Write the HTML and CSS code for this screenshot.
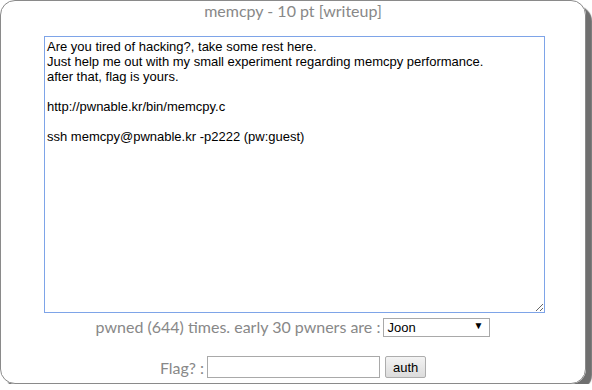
FILE: index.html
```html
<!DOCTYPE html>
<html lang="en">
<head>
    <meta charset="UTF-8">
    <title>memcpy</title>
    <link rel="stylesheet" href="styles.css">
</head>
<body>
    <div class="box">
        <div class="title">memcpy - 10 pt [writeup]</div>

        <!-- challenge description -->
        <textarea class="desc">Are you tired of hacking?, take some rest here.
Just help me out with my small experiment regarding memcpy performance.
after that, flag is yours.

http://pwnable.kr/bin/memcpy.c

ssh memcpy@pwnable.kr -p2222 (pw:guest)</textarea>

        <div class="row pwners">
            <span>pwned (644) times. early 30 pwners are :</span>
            <div class="select-wrap">
                <select class="pwner-list">
                    <option>Joon</option>
                </select>
            </div>
        </div>

        <div class="row auth">
            <span>Flag? :</span>
            <input type="text" class="flag">
            <button class="auth-btn">auth</button>
        </div>
    </div>
</body>
</html>
```

FILE: styles.css
```css
/* general */
body {
    margin: 0;
    background: #fff;
    overflow: hidden;
    font-family: 'Lato', sans-serif;
}

/* white card */
.box {
    width: 586px;
    height: 384px;
    box-sizing: border-box;
    border: 1px solid #8a8a8a;
    border-radius: 15px;
    box-shadow: 6px 6px 1px #6f6f6f;
    text-align: center;
}

.title {
    font-size: 16px;
    line-height: 20px;
    color: #888;
}

.desc {
    display: block;
    width: 501px;
    height: 277px;
    box-sizing: border-box;
    margin: 15px 0 0 43px;
    padding: 2px 2px;
    border: 1px solid #7ea4e8;
    outline: none;
    font-family: 'Liberation Sans', Arial, sans-serif;
    font-size: 13px;
    line-height: 15px;
    color: #000;
    resize: both;
}

.row {
    display: flex;
    justify-content: center;
    align-items: center;
    gap: 3px;
    font-size: 16px;
    color: #888;
}

.pwners {
    margin-top: 4px;
    height: 19px;
}

.select-wrap {
    position: relative;
}

.select-wrap::after {
    content: "\25BC";
    position: absolute;
    right: 7px;
    top: 3px;
    font-size: 10px;
    color: #000;
    pointer-events: none;
}

.pwner-list {
    appearance: none;
    width: 107px;
    height: 19px;
    box-sizing: border-box;
    margin: 0;
    padding: 0 3px;
    border: 1px solid #a9a9a9;
    border-radius: 0;
    background: #fff;
    font-family: 'Liberation Sans', Arial, sans-serif;
    font-size: 13px;
    color: #000;
}

.auth {
    margin-top: 20px;
}

.flag {
    width: 173px;
    height: 22px;
    box-sizing: border-box;
    margin: 0;
    border: 1px solid #a9a9a9;
    padding: 1px 2px;
}

.auth-btn {
    height: 22px;
    width: 41px;
    margin: 0 0 0 2px;
    padding: 0;
    border: 1px solid #adadad;
    border-radius: 2px;
    background: linear-gradient(#f3f3f3, #dcdcdc);
    font-family: 'Liberation Sans', Arial, sans-serif;
    font-size: 13px;
    color: #000;
}
```
